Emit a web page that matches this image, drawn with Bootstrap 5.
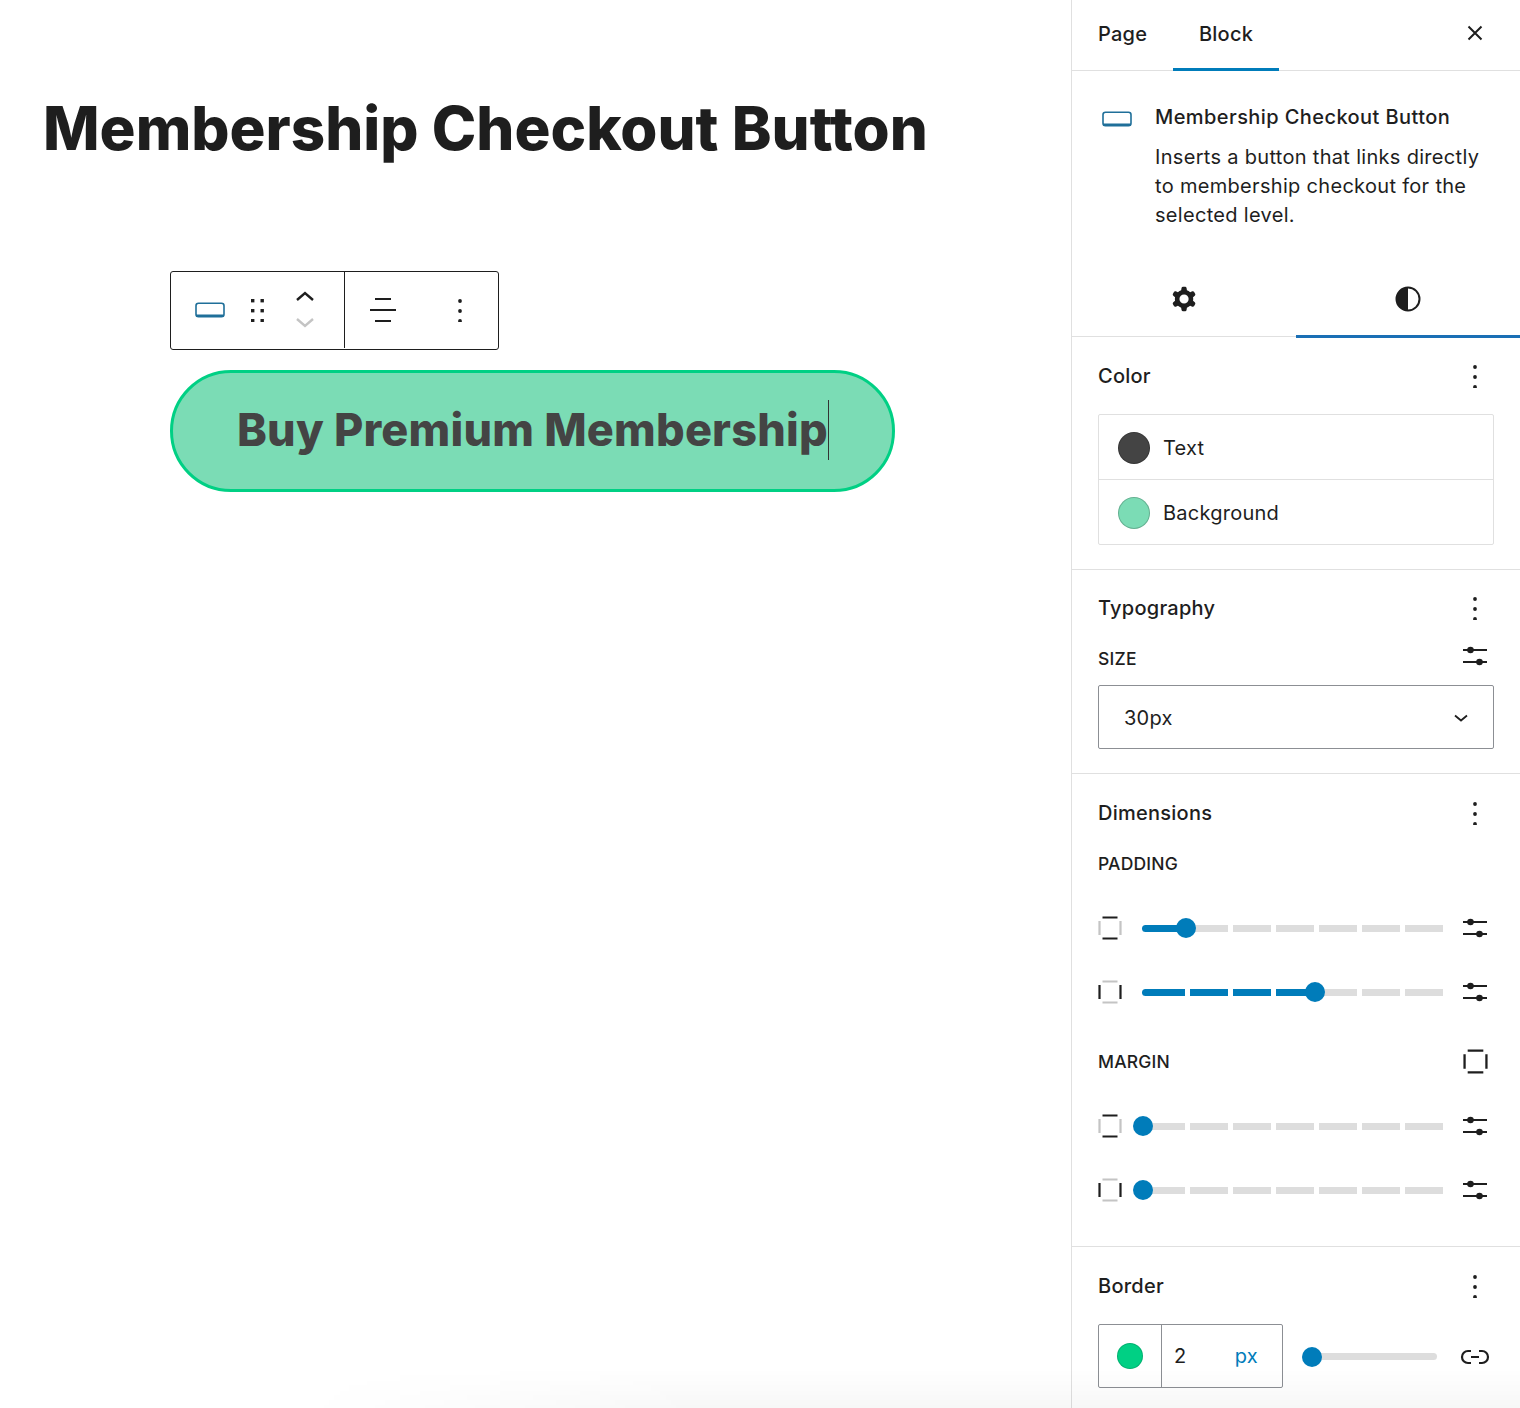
<!DOCTYPE html>
<html lang="en">
<head>
    <meta charset="UTF-8">
    <meta name="viewport" content="width=device-width, initial-scale=1.0">
    <title>Membership Checkout Button</title>
    <link rel="stylesheet" href="https://cdn.jsdelivr.net/npm/bootstrap@5.3.0/dist/css/bootstrap.min.css">
    <style>
        html, body { height: 1408px; overflow: hidden; }
        body { font-family: Inter, "Liberation Sans", sans-serif; color: #1e1e1e; background: #fff; font-size: 20px; letter-spacing: .25px; }
        .shell { height: 1408px; }
        .editor { width: 1071px; flex: none; }
        .sidebar { width: 449px; flex: none; border-left: 1px solid #e0e0e0; }

        .post-title { font-family: Inter, "Liberation Sans", sans-serif; font-weight: 800; font-size: 60px; line-height: 72px; letter-spacing: 0; margin: 92px 0 0 43px; color: #1e1e1e; }
        .block-bar { width: 329px; height: 79px; margin: 107px 0 0 170px; border: 1px solid #1e1e1e; border-radius: 3px; }
        .bar-left { width: 174px; height: 76px; border-right: 1px solid #1e1e1e; padding-left: 24px; }
        .bar-right { width: 153px; height: 76px; padding-left: 24px; padding-right: 35px; }
        .drag-ico { margin-left: 24px; }
        .mover-ico { margin-left: 31px; }
        .cta { width: 725px; height: 122px; margin: 20px 0 0 170px; background: #7bdcb5; border: 3px solid #00d084; border-radius: 61px; padding: 0 0 3px 64px; color: #444; font-weight: 800; font-size: 45px; letter-spacing: .2px; line-height: 1; }
        .caret-line { width: 1.5px; height: 60px; background: #333; margin: 1px 0 0 0; }

        .tab-row { height: 71px; border-bottom: 1px solid #e0e0e0; padding-left: 26px; padding-right: 37px; }
        .tab-item { height: 71px; line-height: 69px; font-weight: 500; font-size: 20px; }
        .tab-page { width: 75px; }
        .tab-block { width: 106px; text-align: center; border-bottom: 3px solid #007cba; }
        .block-info { padding: 32px 26px 0 30px; height: 199px; }
        .info-text { margin-left: 23px; }
        .info-title { font-weight: 500; font-size: 20px; line-height: 29px; margin-bottom: 11px; letter-spacing: .42px; }
        .info-desc { font-size: 20px; line-height: 29px; margin: 0; letter-spacing: .31px; }
        .sub-tabs { height: 67px; border-bottom: 1px solid #e0e0e0; }
        .sub-tab { width: 224px; height: 68px; padding-top: 16px; }
        .sub-tab.is-on { border-bottom: 3px solid #1a6fb5; }

        .panel-sec { padding: 0 26px; border-bottom: 1px solid #e0e0e0; }
        .sec-head { height: 30px; font-weight: 500; font-size: 20px; line-height: 30px; }
        .more-ico { margin-right: 16px; margin-bottom: 1px; }
        .tune-end { margin-right: 7px; margin-top: -1px; }
        .sec-color { height: 233px; padding-top: 24px; }
        .sec-type { height: 204px; padding-top: 23px; }
        .sec-dims { height: 473px; padding-top: 24px; }
        .sec-border { padding-top: 24px; border-bottom: 0; }
        .field-label { font-size: 17.5px; font-weight: 500; line-height: 24px; letter-spacing: .2px; }
        .size-label { margin-top: 24px; }
        .padding-label { margin-top: 24px; margin-bottom: 20px; }
        .margin-label { margin-top: 25px; margin-bottom: 20px; padding-right: 6px; }

        .color-box { margin-top: 23px; border: 1px solid #e0e0e0; border-radius: 2px; }
        .color-row { height: 64px; padding: 1px 0 0 19px; gap: 13px; }
        .color-row + .color-row { height: 65px; border-top: 1px solid #e0e0e0; }
        .swatch { width: 32px; height: 32px; border-radius: 50%; border: 1px solid rgba(0,0,0,.2); }
        .swatch-dark { background: #444; }
        .swatch-mint { background: #7bdcb5; }

        .size-select { height: 64px; margin-top: 14px; border: 1px solid #8c8f94; border-radius: 2px; padding: 2px 25px 0; font-size: 20px; }

        .slide-row { height: 64px; }
        .slide-track { width: 301px; height: 7px; margin-left: 20px; margin-right: 20px; gap: 5px; }
        .seg { flex: 38 0 0; height: 7px; background: #ddd; }
        .seg:first-child { flex-grow: 43; border-radius: 3.5px 0 0 3.5px; }
        .seg:last-child { border-radius: 0 3.5px 3.5px 0; }
        .seg-on { background: #007cba; }
        .thumb { position: absolute; top: 50%; width: 20px; height: 20px; margin: -10px 0 0 -10px; border-radius: 50%; background: #007cba; }

        .border-ctl { width: 185px; height: 64px; margin-top: 23px; border: 1px solid #8c8f94; border-radius: 2px; }
        .border-swatch { width: 63px; height: 62px; border-right: 1px solid #8c8f94; }
        .swatch-green { width: 26px; height: 26px; border-radius: 50%; background: #00d084; border: 1px solid rgba(0,0,0,.15); }
        .unit-txt { color: #007cba; }
        .mini-track { width: 135px; height: 7px; margin: 0 23px 0 19px; border-radius: 4px; background: #ddd; }

        .fade-foot { position: fixed; left: 300px; right: 0; bottom: 0; height: 40px; pointer-events: none; background: linear-gradient(180deg, rgba(0,0,0,0), rgba(0,0,0,.03)); -webkit-mask-image: linear-gradient(90deg, transparent, #000 400px); mask-image: linear-gradient(90deg, transparent, #000 400px); }
    </style>
</head>
<body>
    <svg width="0" height="0" class="position-absolute">
        <symbol id="i-button" viewBox="0 0 30 16">
            <rect x="1" y="1.2" width="28" height="13.6" rx="2.5" fill="none" stroke="#1f6f99" stroke-width="1.6"/>
            <rect x="1" y="12.6" width="28" height="2.4" rx="1" fill="#1f6f99"/>
        </symbol>
        <symbol id="i-more" viewBox="0 0 6 24">
            <circle cx="3" cy="3" r="1.9" fill="#1e1e1e"/><circle cx="3" cy="13" r="1.9" fill="#1e1e1e"/><circle cx="3" cy="23" r="1.9" fill="#1e1e1e"/>
        </symbol>
        <symbol id="i-tune" viewBox="0 0 24 20">
            <path d="M0 4h24M0 16h24" stroke="#1e1e1e" stroke-width="2" fill="none"/>
            <circle cx="7.500" cy="4" r="3.300" fill="#1e1e1e"/><circle cx="16.500" cy="16" r="3.300" fill="#1e1e1e"/>
        </symbol>
        <symbol id="i-axis-v" viewBox="0 0 24 24">
            <path d="M4.500 1.500h15M4.500 22.500h15" stroke="#1e1e1e" stroke-width="2.200" fill="none"/>
            <path d="M1.500 5v14M22.500 5v14" stroke="#c4c4c4" stroke-width="2.200" fill="none"/>
        </symbol>
        <symbol id="i-axis-h" viewBox="0 0 24 24">
            <path d="M4.500 1.500h15M4.500 22.500h15" stroke="#c4c4c4" stroke-width="2.200" fill="none"/>
            <path d="M1.500 5v14M22.500 5v14" stroke="#1e1e1e" stroke-width="2.200" fill="none"/>
        </symbol>
        <symbol id="i-axis-all" viewBox="0 0 24 24">
            <path d="M4.500 1.500h15M4.500 22.500h15M1.500 5v14M22.500 5v14" stroke="#1e1e1e" stroke-width="2.200" fill="none"/>
        </symbol>
    </svg>

    <div class="shell d-flex">
        <main class="editor">
            <h1 class="post-title">Membership Checkout Button</h1>

            <div class="block-bar d-flex align-items-start">
                <div class="bar-left d-flex align-items-center">
                    <svg width="30" height="16"><use href="#i-button"/></svg>
                    <svg class="drag-ico" width="16" height="24" viewBox="0 0 16 24" fill="#1e1e1e">
                        <rect x="2" y="1" width="3.400" height="3.400"/><rect x="11.500" y="1" width="3.400" height="3.400"/>
                        <rect x="2" y="11" width="3.400" height="3.400"/><rect x="11.500" y="11" width="3.400" height="3.400"/>
                        <rect x="2" y="21" width="3.400" height="3.400"/><rect x="11.500" y="21" width="3.400" height="3.400"/>
                    </svg>
                    <svg class="mover-ico" width="18" height="40" viewBox="0 0 18 40" fill="none" stroke-width="2.400">
                        <path d="M1 10l8-7 8 7" stroke="#1e1e1e"/>
                        <path d="M1 29l8 7 8-7" stroke="#c4c4c4"/>
                    </svg>
                </div>
                <div class="bar-right d-flex align-items-center justify-content-between">
                    <svg width="28" height="26" viewBox="0 0 28 26" stroke="#1e1e1e" stroke-width="2.200">
                        <path d="M6 2h16M1 13h26M6 24h16"/>
                    </svg>
                    <svg width="6" height="24"><use href="#i-more"/></svg>
                </div>
            </div>

            <button type="button" class="cta btn d-flex align-items-center">
                <span>Buy Premium Membership</span><span class="caret-line"></span>
            </button>
        </main>

        <aside class="sidebar">
            <div class="tab-row d-flex align-items-start">
                <div class="tab-item tab-page">Page</div>
                <div class="tab-item tab-block">Block</div>
                <svg class="ms-auto mt-4" width="16" height="18" viewBox="0 0 16 16" stroke="#1e1e1e" stroke-width="2"><path d="M1.500 1.500l13 13M14.500 1.500l-13 13"/></svg>
            </div>

            <div class="block-info d-flex align-items-start">
                <svg class="flex-shrink-0 mt-2" width="30" height="16"><use href="#i-button"/></svg>
                <div class="info-text">
                    <div class="info-title">Membership Checkout Button</div>
                    <p class="info-desc">Inserts a button that links directly to membership checkout for the selected level.</p>
                </div>
            </div>

            <div class="sub-tabs d-flex">
                <div class="sub-tab d-flex align-items-start justify-content-center">
                    <svg width="26" height="26" viewBox="3.400 3.500 17 17" fill="#1e1e1e">
                        <path fill-rule="evenodd" d="M10.289 4.836A1 1 0 0111.275 4h1.306a1 1 0 01.987.836l.244 1.466c.787.26 1.503.679 2.108 1.218l1.393-.522a1 1 0 011.216.437l.653 1.130a1 1 0 01-.23 1.273l-1.148.944a6.025 6.025 0 010 2.435l1.149.946a1 1 0 01.23 1.272l-.653 1.130a1 1 0 01-1.216.437l-1.394-.522c-.605.54-1.32.958-2.108 1.218l-.244 1.466a1 1 0 01-.987.836h-1.306a1 1 0 01-.986-.836l-.244-1.466a5.995 5.995 0 01-2.108-1.218l-1.394.522a1 1 0 01-1.217-.436l-.653-1.131a1 1 0 01.23-1.272l1.149-.946a6.026 6.026 0 010-2.435l-1.148-.944a1 1 0 01-.23-1.272l.653-1.131a1 1 0 011.217-.437l1.393.522a5.994 5.994 0 012.108-1.218l.244-1.466zM14.929 12a3 3 0 11-6 0 3 3 0 016 0z"/>
                    </svg>
                </div>
                <div class="sub-tab is-on d-flex align-items-start justify-content-center">
                    <svg width="26" height="26" viewBox="0 0 26 26">
                        <circle cx="13" cy="13" r="11.500" fill="#fff" stroke="#1e1e1e" stroke-width="2"/>
                        <path d="M13 1.500a11.500 11.500 0 0 0 0 23z" fill="#1e1e1e"/>
                    </svg>
                </div>
            </div>

            <section class="panel-sec sec-color">
                <div class="sec-head d-flex justify-content-between align-items-center">
                    <span>Color</span><svg class="more-ico" width="6" height="24"><use href="#i-more"/></svg>
                </div>
                <div class="color-box">
                    <div class="color-row d-flex align-items-center"><span class="swatch swatch-dark"></span>Text</div>
                    <div class="color-row d-flex align-items-center"><span class="swatch swatch-mint"></span>Background</div>
                </div>
            </section>

            <section class="panel-sec sec-type">
                <div class="sec-head d-flex justify-content-between align-items-center">
                    <span>Typography</span><svg class="more-ico" width="6" height="24"><use href="#i-more"/></svg>
                </div>
                <div class="size-label d-flex justify-content-between align-items-start">
                    <span class="field-label">SIZE</span><svg class="tune-end" width="24" height="20"><use href="#i-tune"/></svg>
                </div>
                <div class="size-select d-flex justify-content-between align-items-center">
                    <span>30px</span>
                    <svg width="14" height="9" viewBox="0 0 14 9" fill="none" stroke="#1e1e1e" stroke-width="1.800"><path d="M1 1.500l6 5 6-5"/></svg>
                </div>
            </section>

            <section class="panel-sec sec-dims">
                <div class="sec-head d-flex justify-content-between align-items-center">
                    <span>Dimensions</span><svg class="more-ico" width="6" height="24"><use href="#i-more"/></svg>
                </div>
                <div class="field-label padding-label">PADDING</div>

                <div class="slide-row d-flex align-items-center">
                    <svg width="24" height="24"><use href="#i-axis-v"/></svg>
                    <div class="slide-track d-flex position-relative">
                        <span class="seg seg-on"></span><span class="seg"></span><span class="seg"></span><span class="seg"></span><span class="seg"></span><span class="seg"></span><span class="seg"></span>
                        <span class="thumb" style="left:44px"></span>
                    </div>
                    <svg width="24" height="20"><use href="#i-tune"/></svg>
                </div>
                <div class="slide-row d-flex align-items-center">
                    <svg width="24" height="24"><use href="#i-axis-h"/></svg>
                    <div class="slide-track d-flex position-relative">
                        <span class="seg seg-on"></span><span class="seg seg-on"></span><span class="seg seg-on"></span><span class="seg seg-on"></span><span class="seg"></span><span class="seg"></span><span class="seg"></span>
                        <span class="thumb" style="left:173px"></span>
                    </div>
                    <svg width="24" height="20"><use href="#i-tune"/></svg>
                </div>

                <div class="margin-label d-flex justify-content-between align-items-center">
                    <span class="field-label">MARGIN</span><svg width="25" height="25"><use href="#i-axis-all"/></svg>
                </div>

                <div class="slide-row d-flex align-items-center">
                    <svg width="24" height="24"><use href="#i-axis-v"/></svg>
                    <div class="slide-track d-flex position-relative">
                        <span class="seg"></span><span class="seg"></span><span class="seg"></span><span class="seg"></span><span class="seg"></span><span class="seg"></span><span class="seg"></span>
                        <span class="thumb" style="left:1px"></span>
                    </div>
                    <svg width="24" height="20"><use href="#i-tune"/></svg>
                </div>
                <div class="slide-row d-flex align-items-center">
                    <svg width="24" height="24"><use href="#i-axis-h"/></svg>
                    <div class="slide-track d-flex position-relative">
                        <span class="seg"></span><span class="seg"></span><span class="seg"></span><span class="seg"></span><span class="seg"></span><span class="seg"></span><span class="seg"></span>
                        <span class="thumb" style="left:1px"></span>
                    </div>
                    <svg width="24" height="20"><use href="#i-tune"/></svg>
                </div>
            </section>

            <section class="panel-sec sec-border">
                <div class="sec-head d-flex justify-content-between align-items-center">
                    <span>Border</span><svg class="more-ico" width="6" height="24"><use href="#i-more"/></svg>
                </div>
                <div class="d-flex align-items-center">
                    <div class="border-ctl d-flex align-items-center">
                        <div class="border-swatch d-flex align-items-center justify-content-center"><span class="swatch-green"></span></div>
                        <span class="ms-2 ps-1">2</span>
                        <span class="unit-txt ms-auto me-4">px</span>
                    </div>
                    <div class="mini-track position-relative mt-4"><span class="thumb" style="left:10px"></span></div>
                    <svg class="mt-4" width="30" height="18" viewBox="0 0 30 18" fill="none" stroke="#1e1e1e" stroke-width="2.200">
                        <path d="M11 3H8a6 6 0 0 0 0 12h3M19 3h3a6 6 0 0 1 0 12h-3M11 9h8"/>
                    </svg>
                </div>
            </section>
        </aside>
    </div>
    <div class="fade-foot"></div>

    <script src="https://cdn.jsdelivr.net/npm/bootstrap@5.3.0/dist/js/bootstrap.bundle.min.js"></script>
</body>
</html>
